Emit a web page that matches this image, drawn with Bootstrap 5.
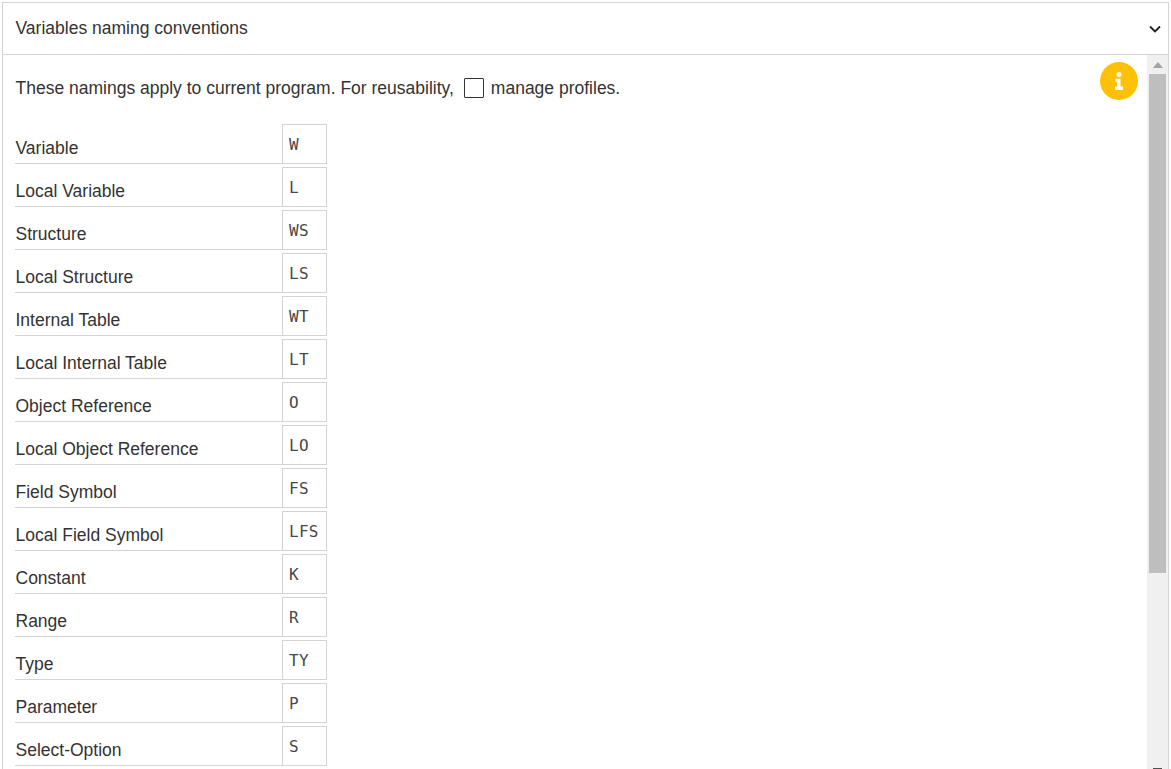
<!doctype html>
<html lang="en"><head><meta charset="utf-8"><title>Variables naming conventions</title>
<link href="https://cdn.jsdelivr.net/npm/bootstrap@5.3.0/dist/css/bootstrap.min.css" rel="stylesheet">
<style>
html,body{height:100%;overflow:hidden;background:#fff}
body{font-family:"Liberation Sans",Arial,sans-serif;font-size:17.5px;color:#333;padding:2px 2px 0 2px}
.panel-box{border:1px solid #d3d3d3;border-bottom:0;height:767px;display:flex;flex-direction:column}
.panel-head{height:52px;flex:none;border-bottom:1px solid #d3d3d3;padding:0 7px 0 12.5px}
.panel-body{flex:1;min-height:0;overflow:hidden}
.content-area{flex:1;min-width:0;position:relative;padding:22px 0 0 12px;overflow:hidden}
.intro-line{height:22px;line-height:22px;margin-bottom:25px;padding-left:.5px}
.fake-check{width:20px;height:20px;border:1px solid #333;border-radius:1px;margin:0 7px 0 10px;flex:none}
.name-row{display:flex;width:312px;height:40px;margin-bottom:3px;border-bottom:1px solid #d3d3d3}
.name-label{width:267px;flex:none;padding:14px 0 0 .5px;line-height:20px}
.name-input{width:45px;height:40px;flex:none;border:1px solid #d3d3d3;padding:10px 0 0 6px;font-family:"DejaVu Sans Mono",monospace;font-size:16px;letter-spacing:.3px;line-height:20px;color:#484848;background:#fff}
.info-dot{position:absolute;top:7px;right:9px;width:38px;height:38px;border-radius:50%;background:#ffc107;display:flex;align-items:center;justify-content:center}
.scroll-rail{width:21px;flex:none;background:#f0f0f0;display:flex;flex-direction:column;padding-left:2px;position:relative}
.scroll-up{height:19px;flex:none;width:17px;display:flex;align-items:center;justify-content:center}
.scroll-thumb{width:17px;height:499px;background:#bebebe;flex:none}
.scroll-down{position:absolute;bottom:0;left:6px;width:9px;height:1px;background:#505050}
</style></head>
<body>
<div class="panel-box">
  <div class="panel-head d-flex align-items-center justify-content-between">
    <span>Variables naming conventions</span>
    <svg width="12" height="8" viewBox="0 0 12 8"><path d="M1 1.5l5 5 5-5" fill="none" stroke="#222" stroke-width="1.8"/></svg>
  </div>
  <div class="panel-body d-flex">
    <div class="content-area">
      <div class="intro-line d-flex align-items-center">These namings apply to current program. For reusability,<span class="fake-check"></span>manage profiles.</div>
      <div class="name-row"><div class="name-label">Variable</div><div class="name-input">W</div></div>
      <div class="name-row"><div class="name-label">Local Variable</div><div class="name-input">L</div></div>
      <div class="name-row"><div class="name-label">Structure</div><div class="name-input">WS</div></div>
      <div class="name-row"><div class="name-label">Local Structure</div><div class="name-input">LS</div></div>
      <div class="name-row"><div class="name-label">Internal Table</div><div class="name-input">WT</div></div>
      <div class="name-row"><div class="name-label">Local Internal Table</div><div class="name-input">LT</div></div>
      <div class="name-row"><div class="name-label">Object Reference</div><div class="name-input">O</div></div>
      <div class="name-row"><div class="name-label">Local Object Reference</div><div class="name-input">LO</div></div>
      <div class="name-row"><div class="name-label">Field Symbol</div><div class="name-input">FS</div></div>
      <div class="name-row"><div class="name-label">Local Field Symbol</div><div class="name-input">LFS</div></div>
      <div class="name-row"><div class="name-label">Constant</div><div class="name-input">K</div></div>
      <div class="name-row"><div class="name-label">Range</div><div class="name-input">R</div></div>
      <div class="name-row"><div class="name-label">Type</div><div class="name-input">TY</div></div>
      <div class="name-row"><div class="name-label">Parameter</div><div class="name-input">P</div></div>
      <div class="name-row"><div class="name-label">Select-Option</div><div class="name-input">S</div></div>
      <div class="info-dot"><svg width="8" height="18" viewBox="0 0 8 18"><circle cx="4" cy="2.6" r="2.5" fill="#fff"/><path d="M.5 6.7h5v7.9H8V18H0v-3.4h2V10H.5z" fill="#fff"/></svg></div>
    </div>
    <div class="scroll-rail">
      <div class="scroll-up"><svg width="10" height="6" viewBox="0 0 10 6"><path d="M5 0l5 6H0z" fill="#a3a3a3"/></svg></div>
      <div class="scroll-thumb"></div>
      <div class="scroll-down"></div>
    </div>
  </div>
</div>
</body></html>
